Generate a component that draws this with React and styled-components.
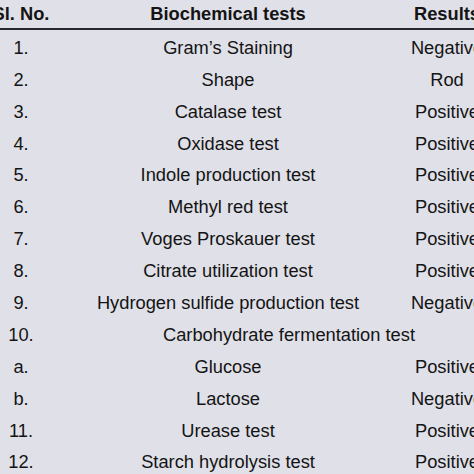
import React from "react";
import styled, { createGlobalStyle } from "styled-components";

const GlobalStyle = createGlobalStyle`
  html, body {
    margin: 0;
    padding: 0;
    background: #e0e0e8;
    overflow: hidden;
  }
`;

const rows = [
  ["1.", "Gram\u2019s Staining", "Negative"],
  ["2.", "Shape", "Rod"],
  ["3.", "Catalase test", "Positive"],
  ["4.", "Oxidase test", "Positive"],
  ["5.", "Indole production test", "Positive"],
  ["6.", "Methyl red test", "Positive"],
  ["7.", "Voges Proskauer test", "Positive"],
  ["8.", "Citrate utilization test", "Positive"],
  ["9.", "Hydrogen sulfide production test", "Negative"],
  ["10.", "Carbohydrate fermentation test", null],
  ["a.", "Glucose", "Positive"],
  ["b.", "Lactose", "Negative"],
  ["11.", "Urease test", "Positive"],
  ["12.", "Starch hydrolysis test", "Positive"],
];

const Page = styled.div`
  width: 474px;
  height: 474px;
  overflow: hidden;
  background: #e0e0e8;
`;

const Table = styled.div`
  display: grid;
  grid-template-columns: 98px 316px 122px;
  grid-auto-rows: 31.9px;
  width: 536px;
  margin-left: -28px;
  font-family: "Liberation Sans", Arial, sans-serif;
  font-size: 18.3px;
  color: #141414;
`;

const HeaderCell = styled.div`
  height: 28px;
  display: flex;
  align-items: center;
  justify-content: center;
  font-weight: bold;
  border-bottom: 2px solid #26262c;
  white-space: nowrap;
`;

const Cell = styled.div`
  grid-column: span ${(p) => p.$span || 1};
  display: flex;
  align-items: center;
  justify-content: center;
  white-space: nowrap;
`;

export default function App() {
  return (
    <Page>
      <GlobalStyle />
      <Table>
        <HeaderCell>Sl. No.</HeaderCell>
        <HeaderCell>Biochemical tests</HeaderCell>
        <HeaderCell>Results</HeaderCell>
        {rows.map(([no, test, result]) => (
          <React.Fragment key={no}>
            <Cell>{no}</Cell>
            {result === null ? (
              <Cell $span={2}>{test}</Cell>
            ) : (
              <>
                <Cell>{test}</Cell>
                <Cell>{result}</Cell>
              </>
            )}
          </React.Fragment>
        ))}
      </Table>
    </Page>
  );
}
